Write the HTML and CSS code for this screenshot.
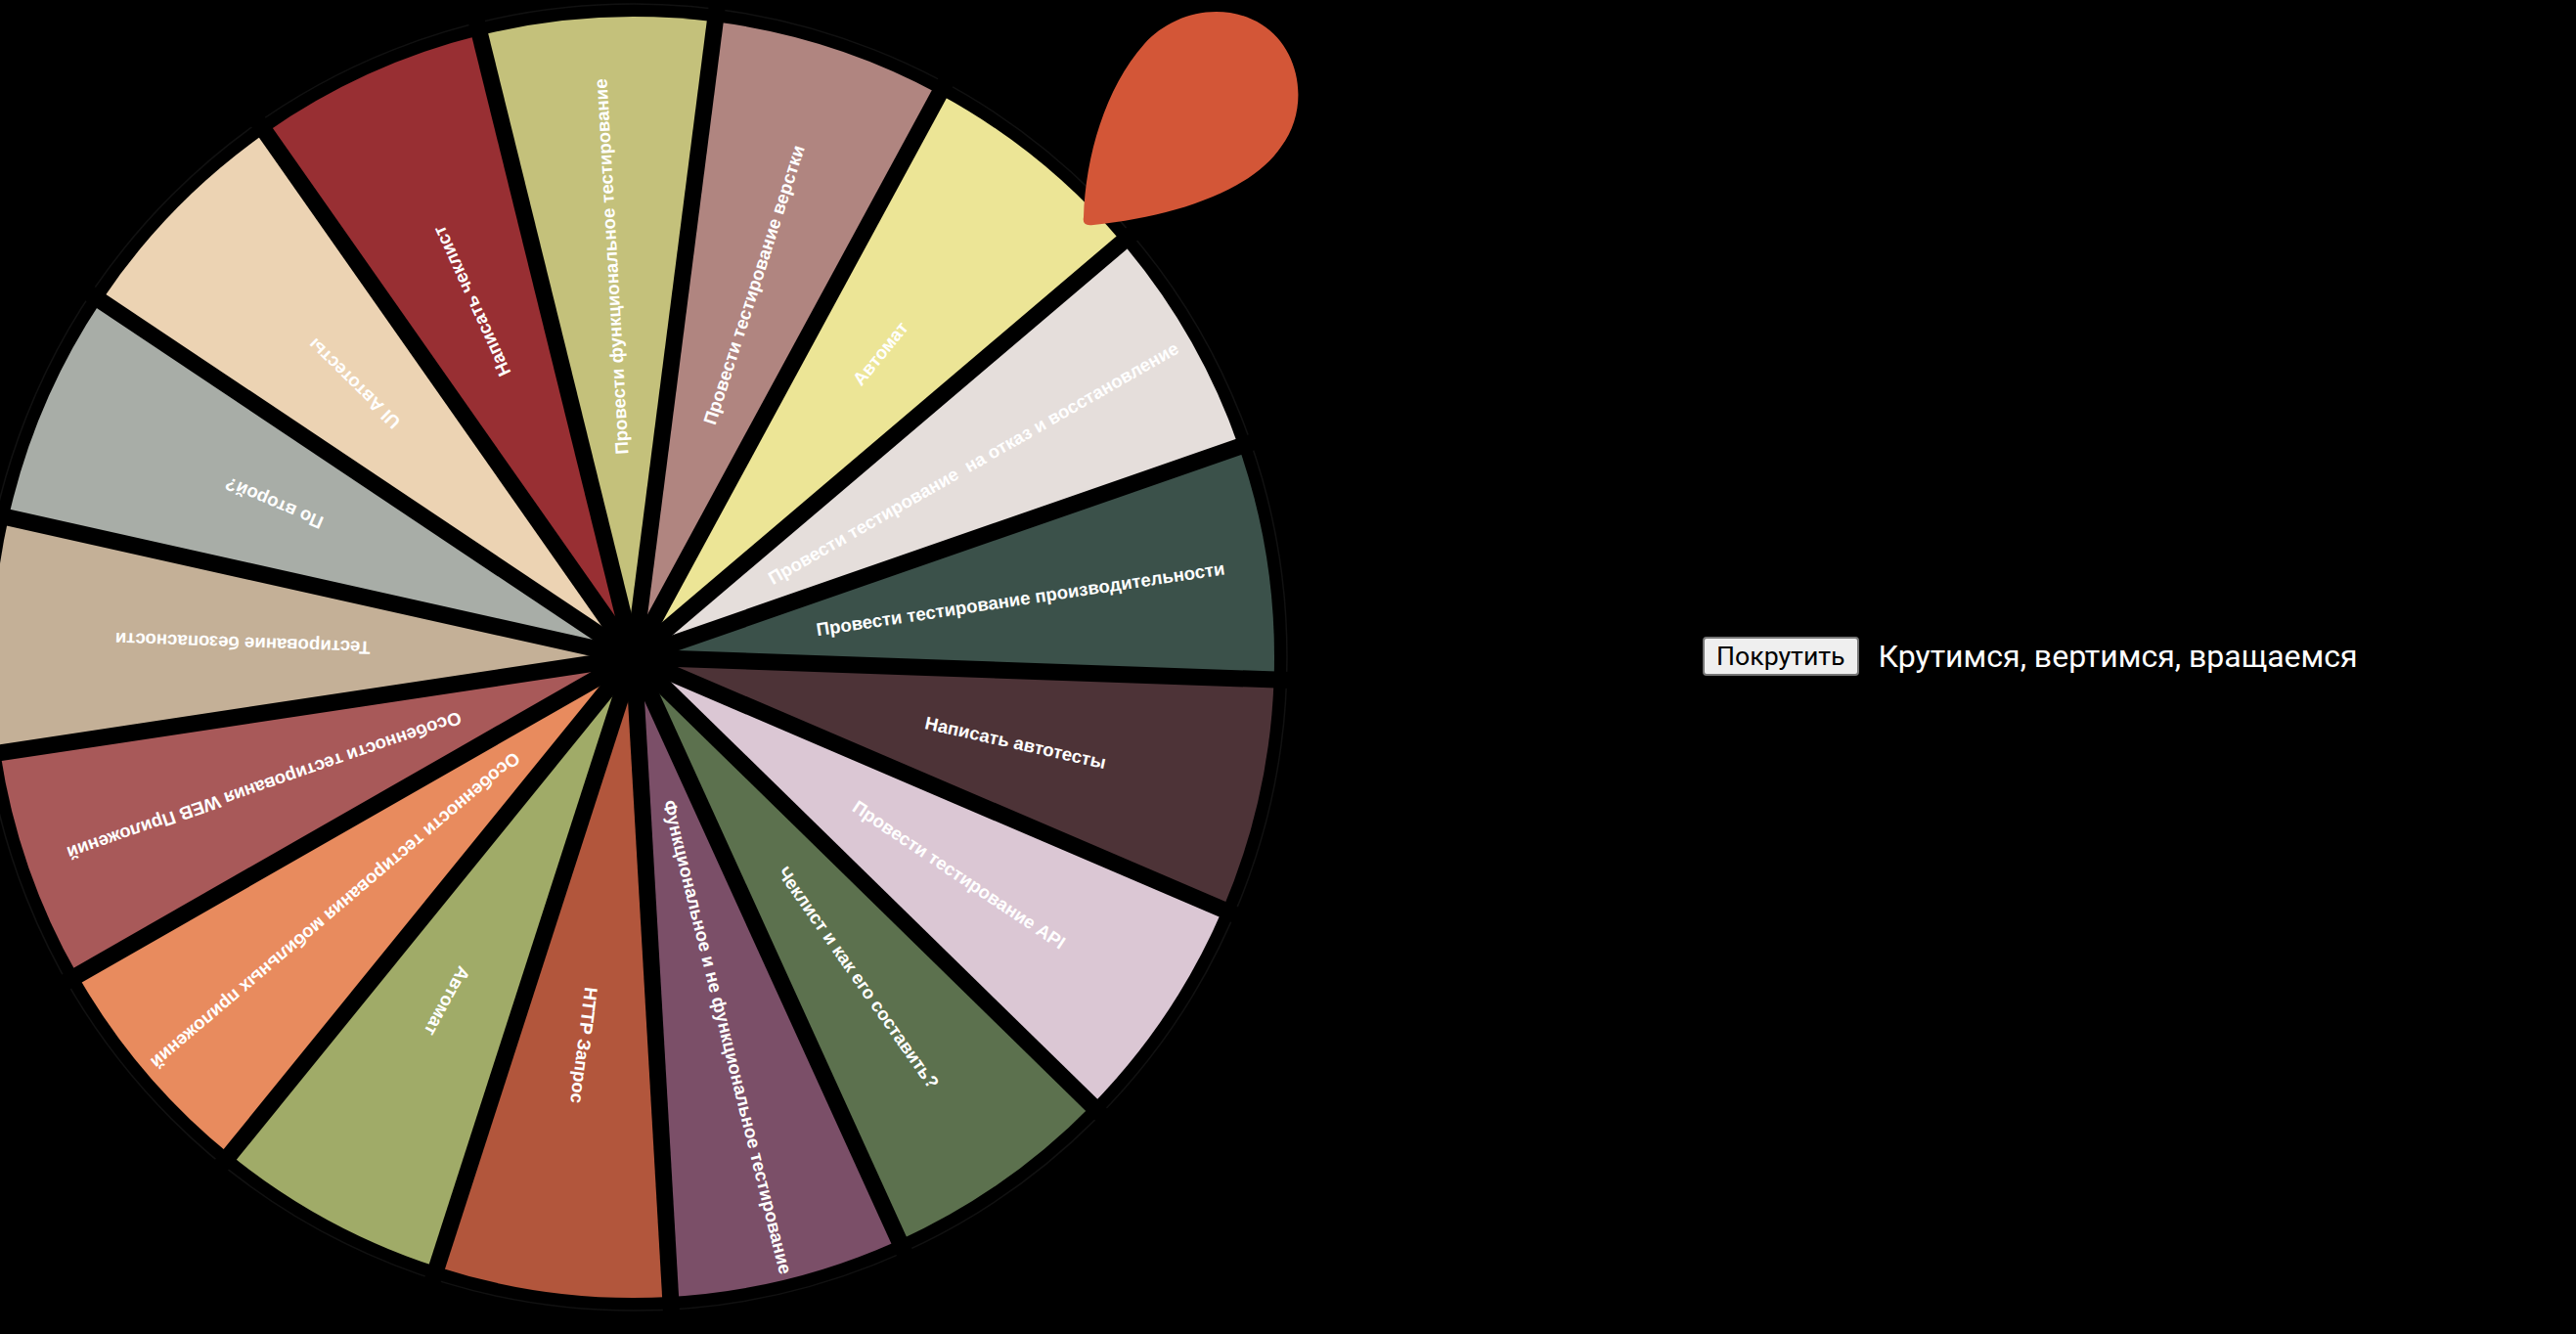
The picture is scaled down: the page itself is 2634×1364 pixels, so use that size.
FILE: index.html
```html
<!DOCTYPE html>
<html lang="ru">
<head>
<meta charset="utf-8">
<title>Колесо</title>
<link rel="stylesheet" href="styles.css">
</head>
<body>
<main class="page">
  <svg class="wheel" width="1341" height="1364" viewBox="0 0 1341 1364" xmlns="http://www.w3.org/2000/svg">
    <g transform="translate(648 672)">
      <circle class="rim" r="668"/>
      <g class="sectors">
        <path transform="rotate(-82.7)" fill="#b08580" d="M0 0 L655 0 A655 655 0 0 1 610.77 236.61 Z"/>
        <path transform="rotate(-61.52)" fill="#ece596" d="M0 0 L655 0 A655 655 0 0 1 610.77 236.61 Z"/>
        <path transform="rotate(-40.35)" fill="#e5dedb" d="M0 0 L655 0 A655 655 0 0 1 610.77 236.61 Z"/>
        <path transform="rotate(-19.17)" fill="#3b514a" d="M0 0 L655 0 A655 655 0 0 1 610.77 236.61 Z"/>
        <path transform="rotate(2.01)" fill="#4d3337" d="M0 0 L655 0 A655 655 0 0 1 610.77 236.61 Z"/>
        <path transform="rotate(23.18)" fill="#dbc7d4" d="M0 0 L655 0 A655 655 0 0 1 610.77 236.61 Z"/>
        <path transform="rotate(44.36)" fill="#5c714e" d="M0 0 L655 0 A655 655 0 0 1 610.77 236.61 Z"/>
        <path transform="rotate(65.54)" fill="#7b4f68" d="M0 0 L655 0 A655 655 0 0 1 610.77 236.61 Z"/>
        <path transform="rotate(86.71)" fill="#b2563c" d="M0 0 L655 0 A655 655 0 0 1 610.77 236.61 Z"/>
        <path transform="rotate(107.89)" fill="#a0ab68" d="M0 0 L655 0 A655 655 0 0 1 610.77 236.61 Z"/>
        <path transform="rotate(129.07)" fill="#e88b5e" d="M0 0 L655 0 A655 655 0 0 1 610.77 236.61 Z"/>
        <path transform="rotate(150.24)" fill="#a85959" d="M0 0 L655 0 A655 655 0 0 1 610.77 236.61 Z"/>
        <path transform="rotate(171.42)" fill="#c4b097" d="M0 0 L655 0 A655 655 0 0 1 610.77 236.61 Z"/>
        <path transform="rotate(192.59)" fill="#a8ada7" d="M0 0 L655 0 A655 655 0 0 1 610.77 236.61 Z"/>
        <path transform="rotate(213.77)" fill="#ecd3b3" d="M0 0 L655 0 A655 655 0 0 1 610.77 236.61 Z"/>
        <path transform="rotate(234.95)" fill="#982f33" d="M0 0 L655 0 A655 655 0 0 1 610.77 236.61 Z"/>
        <path transform="rotate(256.12)" fill="#c4c17b" d="M0 0 L655 0 A655 655 0 0 1 610.77 236.61 Z"/>
      </g>
      <g class="spokes">
        <line x2="672" transform="rotate(-82.7)"/>
        <line x2="672" transform="rotate(-61.52)"/>
        <line x2="672" transform="rotate(-40.35)"/>
        <line x2="672" transform="rotate(-19.17)"/>
        <line x2="672" transform="rotate(2.01)"/>
        <line x2="672" transform="rotate(23.18)"/>
        <line x2="672" transform="rotate(44.36)"/>
        <line x2="672" transform="rotate(65.54)"/>
        <line x2="672" transform="rotate(86.71)"/>
        <line x2="672" transform="rotate(107.89)"/>
        <line x2="672" transform="rotate(129.07)"/>
        <line x2="672" transform="rotate(150.24)"/>
        <line x2="672" transform="rotate(171.42)"/>
        <line x2="672" transform="rotate(192.59)"/>
        <line x2="672" transform="rotate(213.77)"/>
        <line x2="672" transform="rotate(234.95)"/>
        <line x2="672" transform="rotate(256.12)"/>
      </g>
      <circle class="hub" r="34"/>
      <g class="labels">
        <text transform="rotate(-72.11) translate(400 0)">Провести тестирование верстки</text>
        <text transform="rotate(-50.94) translate(400 0)">Автомат</text>
        <text transform="rotate(-29.76) translate(400 0)">Провести тестирование  на отказ и восстановление</text>
        <text transform="rotate(-8.59) translate(400 0)">Провести тестирование производительности</text>
        <text transform="rotate(12.59) translate(400 0)">Написать автотесты</text>
        <text transform="rotate(33.77) translate(400 0)">Провести тестирование API</text>
        <text transform="rotate(54.95) translate(400 0)">Чеклист и как его составить?</text>
        <text transform="rotate(76.12) translate(400 0)">Функциональное и не функциональное тестирование</text>
        <text transform="rotate(97.30) translate(400 0)">HTTP Запрос</text>
        <text transform="rotate(118.48) translate(400 0)">Автомат</text>
        <text transform="rotate(139.65) translate(400 0)">Особенности тестирования мобильных приложений</text>
        <text transform="rotate(160.83) translate(400 0)">Особенности тестирования WEB Приложений</text>
        <text transform="rotate(182.01) translate(400 0)">Тестирование безопасности</text>
        <text transform="rotate(203.18) translate(400 0)">По второй?</text>
        <text transform="rotate(224.36) translate(400 0)">UI Автотесты</text>
        <text transform="rotate(245.54) translate(400 0)">Написать чеклист</text>
        <text transform="rotate(266.71) translate(400 0)">Провести функциональное тестирование</text>
      </g>
    </g>
    <path class="pointer" d="M1108 222 C1110 160 1130 90 1170 45 C1198 13 1250 0 1290 25 C1330 50 1340 110 1310 150 C1280 195 1200 222 1118 230 Q1106 232 1108 222 Z"/>
  </svg>
  <div class="controls">
    <button class="spin" type="button">Покрутить</button>
    <span class="caption">Крутимся, вертимся, вращаемся</span>
  </div>
</main>
</body>
</html>
```
FILE: styles.css
```css
html, body {
  margin: 0;
  padding: 0;
  background: #000;
}

body {
  font-family: "Roboto", "Liberation Sans", sans-serif;
  overflow: hidden;
}

.page {
  display: flex;
  align-items: center;
  width: 2634px;
  height: 1364px;
}

.wheel {
  display: block;
  flex: 0 0 auto;
}

.rim {
  fill: #000;
  stroke: #111;
  stroke-width: 1.5;
}

.spokes line {
  stroke: #000;
  stroke-width: 17;
}

.hub {
  fill: #000;
}

.labels text {
  font-family: "Liberation Sans", Arial, sans-serif;
  font-weight: bold;
  font-size: 18.6px;
  fill: #fff;
  text-anchor: middle;
  dominant-baseline: central;
  white-space: pre;
}

.pointer {
  fill: #d35637;
}

.controls {
  display: flex;
  align-items: center;
  gap: 20px;
  padding-left: 400px;
  padding-bottom: 22px;
}

.spin {
  font-family: "Roboto", "Liberation Sans", sans-serif;
  font-size: 26.67px;
  color: #000;
  background: #efefef;
  border: 2px solid #767676;
  border-radius: 4px;
  padding: 2px 12px;
  margin: 0;
  line-height: normal;
}

.caption {
  font-family: "Roboto", "Liberation Sans", sans-serif;
  font-size: 32px;
  color: #fff;
}
```
